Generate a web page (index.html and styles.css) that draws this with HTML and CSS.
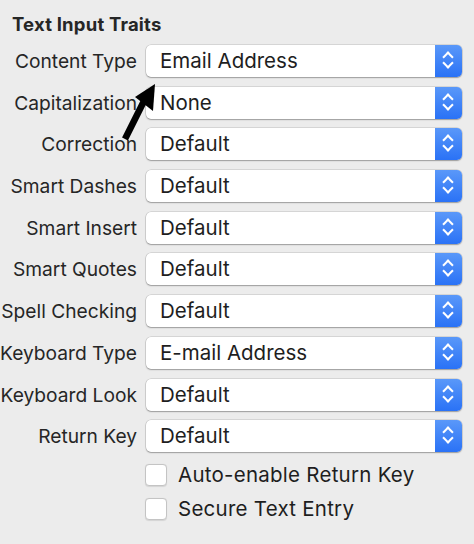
FILE: index.html
```html
<!DOCTYPE html>
<html lang="en">

<head>
  <meta charset="UTF-8">
  <meta name="viewport" content="width=device-width, initial-scale=1.0">
  <title>Text Input Traits</title>
  <link rel="stylesheet" href="styles.css">
</head>

<body>
  <div class="panel">
    <div class="title">Text Input Traits</div>
    <div class="rows">
      <div class="label">Content Type</div>
      <div class="popup"><span class="value">Email Address</span><span class="stepper"></span></div>
      <div class="label">Capitalization</div>
      <div class="popup"><span class="value">None</span><span class="stepper"></span></div>
      <div class="label">Correction</div>
      <div class="popup"><span class="value">Default</span><span class="stepper"></span></div>
      <div class="label">Smart Dashes</div>
      <div class="popup"><span class="value">Default</span><span class="stepper"></span></div>
      <div class="label">Smart Insert</div>
      <div class="popup"><span class="value">Default</span><span class="stepper"></span></div>
      <div class="label">Smart Quotes</div>
      <div class="popup"><span class="value">Default</span><span class="stepper"></span></div>
      <div class="label">Spell Checking</div>
      <div class="popup"><span class="value">Default</span><span class="stepper"></span></div>
      <div class="label">Keyboard Type</div>
      <div class="popup"><span class="value">E-mail Address</span><span class="stepper"></span></div>
      <div class="label">Keyboard Look</div>
      <div class="popup"><span class="value">Default</span><span class="stepper"></span></div>
      <div class="label">Return Key</div>
      <div class="popup"><span class="value">Default</span><span class="stepper"></span></div>
    </div>
    <div class="checks">
      <label class="check"><span class="box"></span>Auto-enable Return Key</label>
      <label class="check"><span class="box"></span>Secure Text Entry</label>
    </div>
  </div>

  <svg class="arrow" width="474" height="544" viewBox="0 0 474 544">
    <line x1="125" y1="139" x2="145" y2="99" stroke="#000" stroke-width="6.5" />
    <polygon points="155,84 135,97 153,111" fill="#000" />
  </svg>
</body>

</html>
```

FILE: styles.css
```css
html,
body {
  height: 100%;
  margin: 0;
  overflow: hidden;
}

body {
  background: #ececec;
  font-family: Inter, "Liberation Sans", sans-serif;
  color: #222;
  position: relative;
}

div.panel {
  padding: 13px 0 0 0;
}

div.title {
  font-size: 18.5px;
  font-weight: 700;
  letter-spacing: 0.2px;
  padding-left: 12px;
  height: 32px;
  line-height: 22px;
  color: #262626;
}

div.rows {
  display: grid;
  grid-template-columns: 137px 316px;
  column-gap: 9px;
  row-gap: 9.7px;
  align-items: center;
}

div.label {
  font-size: 19.2px;
  text-align: right;
  white-space: nowrap;
  color: #262626;
}

div.popup {
  height: 32px;
  display: flex;
  align-items: stretch;
  background: #fff;
  border-radius: 5px;
  box-shadow: 0 0 0 0.5px rgba(0, 0, 0, 0.18), 0 1px 1.5px rgba(0, 0, 0, 0.28);
  overflow: hidden;
}

span.value {
  flex: 1;
  font-size: 20.5px;
  line-height: 32px;
  padding-left: 14px;
  color: #1e1e1e;
}

span.stepper {
  width: 27px;
  background: linear-gradient(#5a98f9, #2a72f6);
  position: relative;
}

span.stepper::before,
span.stepper::after {
  content: "";
  position: absolute;
  left: 9px;
  width: 6px;
  height: 6px;
  border-left: 2px solid #fff;
  border-top: 2px solid #fff;
}

span.stepper::before {
  top: 8px;
  transform: rotate(45deg);
}

span.stepper::after {
  top: 14px;
  transform: rotate(225deg);
}

div.checks {
  display: flex;
  flex-direction: column;
  gap: 13px;
  padding: 12px 0 0 145px;
}

label.check {
  display: flex;
  align-items: center;
  gap: 11px;
  font-size: 20.5px;
  letter-spacing: 0.25px;
  color: #1e1e1e;
  height: 21px;
}

span.box {
  width: 20px;
  height: 20px;
  background: #fff;
  border: 1px solid #c4c4c4;
  border-radius: 4px;
  box-shadow: 0 0.5px 1px rgba(0, 0, 0, 0.1);
}

svg.arrow {
  position: absolute;
  left: 0;
  top: 0;
  pointer-events: none;
}
```
